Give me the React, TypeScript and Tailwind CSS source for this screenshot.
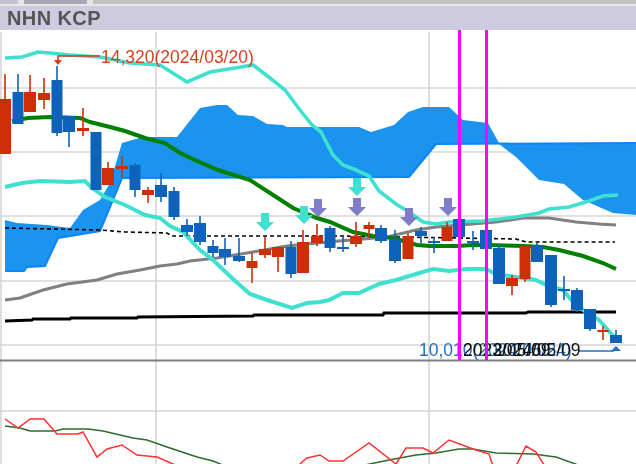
const RED = '#cc2f05'
const BLUE = '#0f62ba'

// [center x, wick top, wick bottom, body top, body bottom, half width, up]
const candles: [number, number, number, number, number, number, boolean][] = [
  [5, 74, 154, 99, 154, 6, true],
  [18, 74, 124, 92, 124, 5.5, false],
  [30, 75, 112, 92, 112, 6, true],
  [44, 78, 109, 93, 100, 6, true],
  [57, 66, 136, 80, 133, 5.5, false],
  [69, 116, 147, 116, 132, 6, false],
  [83, 108, 136, 128, 131, 6, true],
  [96, 132, 190, 132, 190, 5.5, false],
  [108, 162, 185, 168, 185, 6, true],
  [122, 156, 177, 166, 169, 6, true],
  [135, 163, 197, 165, 190, 5.5, false],
  [148, 187, 203, 190, 195, 6, true],
  [161, 173, 202, 185, 197, 6, false],
  [174, 187, 220, 191, 217, 5.5, false],
  [187, 219, 236, 225, 232, 6, false],
  [200, 216, 245, 223, 242, 6, false],
  [213, 240, 257, 246, 253, 5.5, false],
  [225, 238, 265, 249, 257, 6, false],
  [239, 238, 262, 256, 261, 6, false],
  [252, 253, 283, 261, 268, 5.5, true],
  [265, 237, 258, 249, 255, 6, true],
  [278, 247, 272, 247, 257, 6, true],
  [291, 241, 278, 247, 274, 5.5, false],
  [303, 230, 273, 242, 273, 6, true],
  [317, 224, 246, 236, 243, 6, true],
  [330, 226, 252, 228, 248, 5.5, false],
  [343, 237, 252, 247, 249, 6, false],
  [356, 222, 247, 236, 244, 6, true],
  [369, 222, 238, 225, 229, 5.5, true],
  [381, 225, 243, 228, 241, 6, false],
  [395, 230, 263, 239, 261, 6, false],
  [408, 233, 259, 236, 259, 5.5, true],
  [421, 227, 243, 231, 236, 6, false],
  [434, 237, 253, 241, 243, 6, false],
  [447, 222, 241, 227, 241, 5.5, true],
  [459, 219, 240, 219, 237, 6, false],
  [473, 231, 250, 241, 243, 6, false],
  [486, 228, 249, 230, 249, 6, false],
  [499, 244, 284, 248, 284, 6, false],
  [512, 275, 295, 278, 286, 6, true],
  [525, 246, 282, 246, 279, 5.5, true],
  [537, 243, 262, 245, 262, 6, false],
  [551, 255, 307, 255, 305, 6, false],
  [564, 276, 300, 289, 291, 6, false],
  [577, 288, 312, 290, 310, 6, false],
  [590, 309, 331, 309, 329, 6, false],
  [603, 326, 340, 330, 332, 5.5, true],
  [616, 330, 343, 335, 343, 6, false],
]

const arrows: [number, number, string][] = [
  [265, 213, '#40e0d0'],
  [304, 206, '#40e0d0'],
  [318, 199, '#7f7cc9'],
  [357, 178, '#40e0d0'],
  [357, 198, '#7f7cc9'],
  [409, 208, '#7f7cc9'],
  [448, 198, '#7f7cc9'],
]

const cloud =
  '5,220 17,223 47,225 70,228 83,210 100,200 110,183 122,143 143,137 177,137 200,108 217,105 227,105 238,115 253,116 267,124 283,125 287,127 359,127 371,132 394,125 408,112 423,107 449,107 463,120 488,123 499,143 636,143 636,215 613,213 583,200 564,184 539,180 516,157 499,144 436,144 409,177 122,178 100,231 58,238 45,266 27,267 24,271 5,271'
const cloudEdge = '5,271 24,271 27,267 45,266 58,238 100,231 122,178 409,177 436,144 636,143'

const upper =
  '5,58 22,57 38,52 50,53 70,55 100,57 130,63 160,65 187,82 210,72 235,68 253,65 270,78 285,90 300,110 312,125 321,132 333,155 343,165 356,170 369,176 379,191 396,204 409,212 423,222 436,224 449,222 483,221 516,217 539,213 549,209 569,207 589,201 603,196 618,195'
const lower =
  '5,187 22,183 40,181 70,182 85,181 92,188 105,197 125,205 145,215 160,218 170,226 183,232 200,250 213,260 233,279 250,294 267,300 292,308 307,303 320,302 329,300 343,293 359,293 379,284 396,280 416,274 433,269 449,271 466,269 486,269 496,274 516,277 536,280 546,285 563,290 573,302 586,312 599,320 616,339'
const middle =
  '12,121 28,118 50,117 80,118 90,122 110,127 125,131 145,138 165,143 180,153 195,160 218,170 250,180 270,193 293,208 317,218 330,222 353,232 373,236 393,238 417,245 430,246 457,246 473,245 489,245 523,246 543,247 559,250 583,256 603,263 616,269'
const gray =
  '5,300 20,298 43,290 67,284 97,280 117,274 140,270 160,266 177,264 190,261 217,258 253,252 287,246 327,242 387,237 416,230 436,227 496,222 523,218 549,218 576,222 599,224 616,225'
const black =
  '5,321 32,320 33,319 70,319 71,318 137,318 138,317 253,316 254,315 383,315 384,313 526,313 528,312 616,312'
const dashed = '5,228 100,230 125,232 167,233 172,236 340,236 516,239 526,242 615,242'
const redLine =
  '5,419 18,428 30,419 44,419 57,434 78,434 83,432 97,457 107,449 122,445 137,455 157,457 173,464 185,470 295,470 302,462 307,458 320,455 329,461 343,461 369,443 396,464 406,448 423,448 433,453 449,440 473,449 489,454 493,466 516,466 526,446 536,452 546,468'
const greenLine =
  '5,426 20,428 30,431 55,431 63,429 88,429 103,431 133,438 147,440 167,447 197,457 213,461 225,466 360,466 389,460 416,455 436,453 459,449 473,449 496,453 533,454 556,457 581,466'

const labelClass = "font-['Liberation_Sans',Arial,sans-serif] text-[17.5px]"

export default function App() {
  return (
    <div className="flex h-[464px] w-[636px] flex-col overflow-hidden bg-white">
      <div className="flex h-[6px] gap-[6px] bg-[#e6e6e6]">
        <div className="h-[4px] w-[18px] bg-[#c4c2cf]" />
        <div className="h-[4px] w-[63px] bg-[#a9a7b5]" />
        <div className="h-[4px] flex-1 bg-[#c2c2c2]" />
      </div>
      <div className="flex h-[24px] items-center bg-[#cecae0] pl-[7px] font-['Liberation_Sans',Arial,sans-serif] text-[20px] font-bold tracking-[0.4px] text-[#555555] blur-[0.5px]">
        NHN KCP
      </div>
      <svg viewBox="0 30 636 434" className="h-[434px] w-[636px] blur-[0.5px]">
        {/* grid */}
        <g stroke="#d6d6d6" strokeWidth="1.6" fill="none">
          <line x1="1" y1="32" x2="1" y2="464" />
          <line x1="156" y1="32" x2="156" y2="464" />
          <line x1="429" y1="32" x2="429" y2="464" />
          {[88, 152, 216, 281, 345, 411].map((y) => (
            <line key={y} x1="0" y1={y} x2="636" y2={y} />
          ))}
        </g>
        <line x1="0" y1="360.5" x2="636" y2="360.5" stroke="#808080" strokeWidth="1.8" />

        {/* ichimoku */}
        <polygon points={cloud} fill="#1a94ee" />
        <polyline points={cloudEdge} fill="none" stroke="#0a84ff" strokeWidth="2" />

        <polyline points={gray} fill="none" stroke="#808080" strokeWidth="3.2" />
        <polyline points={black} fill="none" stroke="#000000" strokeWidth="3" />
        <polyline points={dashed} fill="none" stroke="#000000" strokeWidth="1.6" strokeDasharray="4 3" />
        <polyline points={upper} fill="none" stroke="#40e0d0" strokeWidth="3.6" />
        <polyline points={lower} fill="none" stroke="#40e0d0" strokeWidth="4" />
        <polyline points={middle} fill="none" stroke="#008000" strokeWidth="4" />

        {/* high / low markers */}
        <path d="M100 56H58V61" fill="none" stroke="#cf3d1c" strokeWidth="1.6" />
        <path d="M54 60H62L58 65Z" fill="#cf3d1c" />
        <path d="M579 351H614" fill="none" stroke="#1f6fc8" strokeWidth="1.6" />
        <path d="M611 351H621L616 346Z" fill="#1f6fc8" />

        {candles.map(([x, wt, wb, bt, bb, hw, up]) => (
          <g key={x} fill={up ? RED : BLUE} stroke={up ? RED : BLUE}>
            <line x1={x} y1={wt} x2={x} y2={wb} strokeWidth="1.6" />
            <rect x={x - hw} y={bt} width={hw * 2} height={bb - bt} stroke="none" />
          </g>
        ))}

        {arrows.map(([x, y, c]) => (
          <path
            key={`${x}-${y}`}
            d={`M${x - 4} ${y}H${x + 4}V${y + 9}H${x + 9}L${x} ${y + 18}L${x - 9} ${y + 9}H${x - 4}Z`}
            fill={c}
          />
        ))}

        {/* lower indicator */}
        <polyline points={greenLine} fill="none" stroke="#2e6b2e" strokeWidth="1.5" />
        <polyline points={redLine} fill="none" stroke="#ff3030" strokeWidth="1.5" />

        <text x="101" y="63" fill="#d8401f" className={labelClass}>14,320(2024/03/20)</text>
        <text x="419" y="356" fill="#1f6fc8" className={labelClass}>10,010(2024/05/24)</text>
        <text x="463" y="356" fill="#111111" className={labelClass}>2023/05/09</text>
        <text x="493" y="356" fill="#111111" className={labelClass}>2024/05/09</text>

        <line x1="459.5" y1="30" x2="459.5" y2="360" stroke="#ff00ff" strokeWidth="3" />
        <line x1="486.5" y1="30" x2="486.5" y2="360" stroke="#ff00ff" strokeWidth="3" />
      </svg>
    </div>
  )
}
